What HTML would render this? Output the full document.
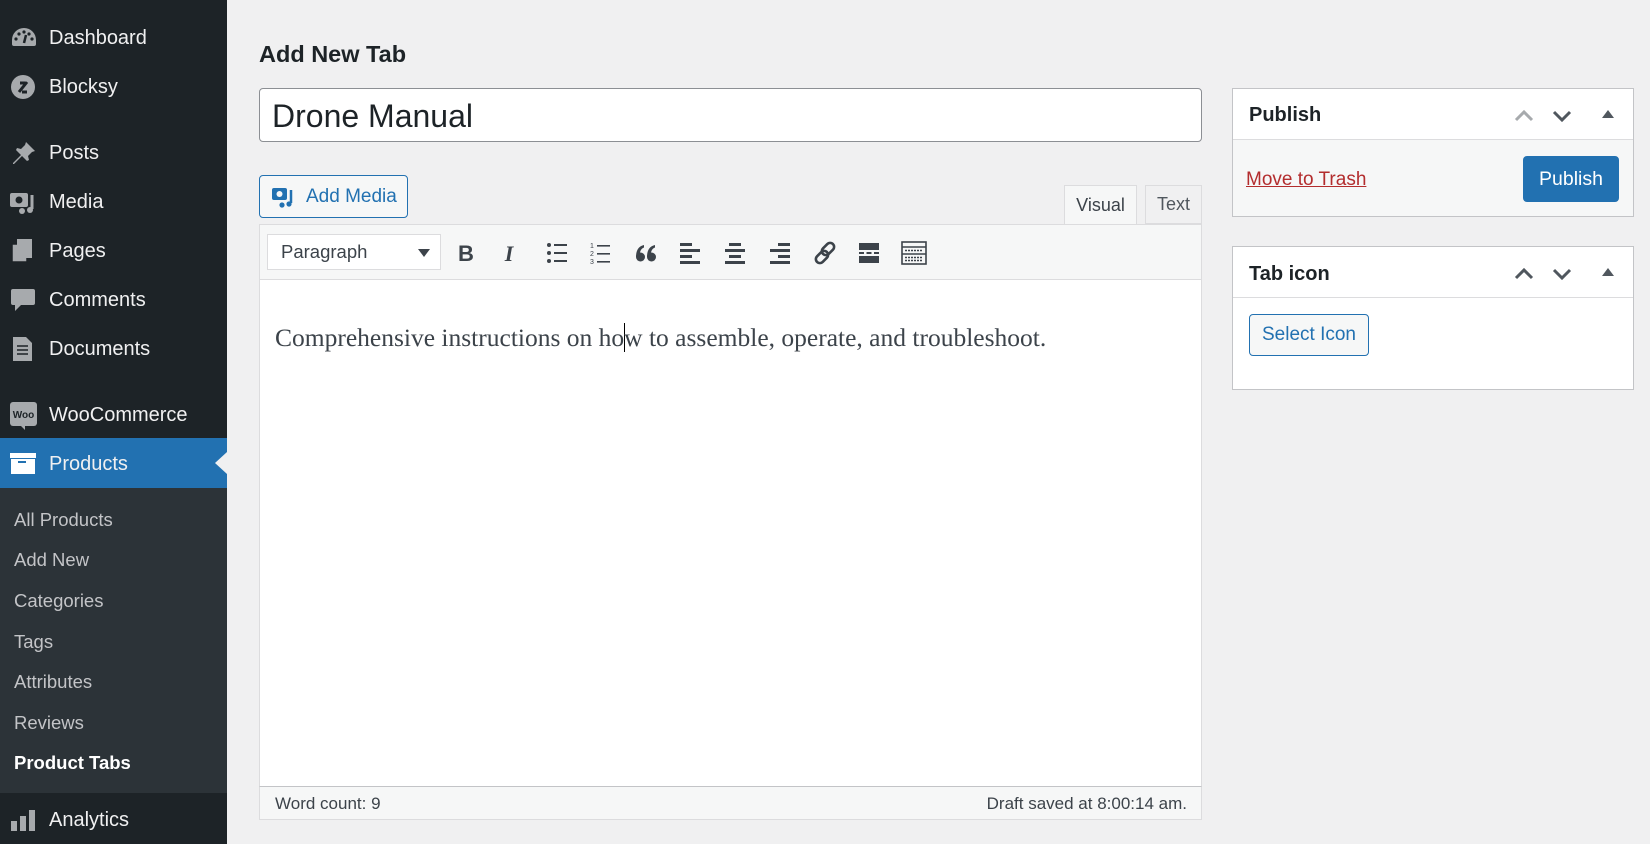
<!DOCTYPE html>
<html><head><meta charset="utf-8"><style>
*{box-sizing:border-box;margin:0;padding:0}
body{width:1650px;height:844px;overflow:hidden;background:#f0f0f1;font-family:"Liberation Sans",sans-serif;position:relative;color:#1d2327}
.side{position:absolute;left:0;top:0;width:227px;height:844px;background:#1d2327}
.mi{position:absolute;left:0;width:227px;color:#f0f0f1;font-size:20px;line-height:24px}
.mi span{position:absolute;left:49px;top:1px;white-space:nowrap}
.mi svg{position:absolute;left:10px;top:0}
.sub{position:absolute;left:0;top:488px;width:227px;height:305px;background:#2c3338}
.si{position:absolute;left:14px;color:#c3c4c7;font-size:18.5px;line-height:22px}
.abs{position:absolute}
.box{position:absolute;background:#fff;border:1px solid #c3c4c7}
.btn{position:absolute;border:1px solid #2271b1;border-radius:4px;color:#2271b1;background:#f6f7f7;font-size:19px;display:flex;align-items:center;justify-content:center}
.ico{position:absolute;top:241px}
</style></head><body>
<div class="side">
 <div class="mi" style="top:25px"><svg width="28" height="24" viewBox="0 0 28 24"><path d="M14 3A12 12 0 0 0 2 15v4a2 2 0 0 0 2 2h20a2 2 0 0 0 2-2v-4A12 12 0 0 0 14 3z" fill="#a7aaad"/><path d="M14 18l2-8" stroke="#1d2327" stroke-width="2.5"/><circle cx="6" cy="14" r="1.6" fill="#1d2327"/><circle cx="9" cy="9" r="1.6" fill="#1d2327"/><circle cx="19" cy="9" r="1.6" fill="#1d2327"/><circle cx="22" cy="14" r="1.6" fill="#1d2327"/><circle cx="14" cy="7" r="1.6" fill="#1d2327"/></svg><span>Dashboard</span></div>
 <div class="mi" style="top:74px"><svg width="28" height="26" viewBox="0 0 28 26"><circle cx="13" cy="13" r="12" fill="#a7aaad"/><path d="M9 18l8-10M10 9h5M12 18h5" stroke="#1d2327" stroke-width="3"/></svg><span>Blocksy</span></div>
 <div class="mi" style="top:140px"><svg width="28" height="26" viewBox="0 0 28 26"><path d="M16 2l9 9-3 1-4 4 1 4-2 1-5-5-8 8-1 0 0-1 8-8-5-5 1-2 4 1 4-4z" fill="#a7aaad"/></svg><span>Posts</span></div>
 <div class="mi" style="top:189px"><svg width="28" height="26" viewBox="0 0 28 26"><rect x="0" y="4" width="18" height="14" rx="2" fill="#a7aaad"/><circle cx="9" cy="11" r="3.5" fill="#1d2327"/><path d="M22 6v14" stroke="#a7aaad" stroke-width="3"/><circle cx="20" cy="21" r="3" fill="#a7aaad"/><circle cx="12" cy="22" r="3" fill="#a7aaad"/></svg><span>Media</span></div>
 <div class="mi" style="top:238px"><svg width="28" height="26" viewBox="0 0 28 26"><rect x="2" y="6" width="15" height="18" fill="#a7aaad" stroke="#1d2327" stroke-width="1.5"/><rect x="7" y="1" width="15" height="19" fill="#a7aaad"/></svg><span>Pages</span></div>
 <div class="mi" style="top:287px"><svg width="28" height="26" viewBox="0 0 28 26"><path d="M3 2h20a2 2 0 0 1 2 2v12a2 2 0 0 1-2 2H11l-6 6v-6H3a2 2 0 0 1-2-2V4a2 2 0 0 1 2-2z" fill="#a7aaad"/></svg><span>Comments</span></div>
 <div class="mi" style="top:336px"><svg width="28" height="26" viewBox="0 0 28 26"><path d="M3 1h13l6 6v18H3z" fill="#a7aaad"/><path d="M7 10h11M7 14h11M7 18h11" stroke="#1d2327" stroke-width="1.6"/></svg><span>Documents</span></div>
 <div class="mi" style="top:402px"><svg width="30" height="28" viewBox="0 0 30 28"><rect x="0" y="0" width="27" height="24" rx="3" fill="#a7aaad"/><path d="M11 24l4 4 0-4z" fill="#a7aaad"/><text x="13.5" y="16" font-size="10" font-family="Liberation Sans" text-anchor="middle" fill="#1d2327" font-weight="bold">Woo</text></svg><span>WooCommerce</span></div>
 <div class="abs" style="top:438px;left:0;width:227px;height:50px;background:#2271b1"></div>
 <div class="abs" style="top:452px;left:215px;width:0;height:0;border-top:11px solid transparent;border-bottom:11px solid transparent;border-right:12px solid #f0f0f1"></div>
 <div class="mi" style="top:451px"><svg width="28" height="26" viewBox="0 0 28 26"><rect x="0" y="2" width="26" height="5" fill="#fff"/><rect x="1" y="8" width="24" height="15" fill="#fff"/><rect x="8" y="10" width="8" height="2" fill="#2271b1"/></svg><span>Products</span></div>
 <div class="sub"></div>
 <div class="si" style="top:509px">All Products</div>
 <div class="si" style="top:549px">Add New</div>
 <div class="si" style="top:590px">Categories</div>
 <div class="si" style="top:631px">Tags</div>
 <div class="si" style="top:671px">Attributes</div>
 <div class="si" style="top:712px">Reviews</div>
 <div class="si" style="top:752px;color:#fff;font-weight:bold">Product Tabs</div>
 <div class="mi" style="top:807px"><svg width="28" height="26" viewBox="0 0 28 26"><rect x="1" y="14" width="6" height="10" fill="#a7aaad"/><rect x="10" y="9" width="6" height="15" fill="#a7aaad"/><rect x="19" y="3" width="6" height="21" fill="#a7aaad"/></svg><span>Analytics</span></div>
</div>

<div class="abs" style="left:259px;top:41px;font-size:23.5px;font-weight:bold;color:#1d2327">Add New Tab</div>
<div class="abs" style="left:259px;top:88px;width:943px;height:54px;background:#fff;border:1px solid #8c8f94;border-radius:4px"></div>
<div class="abs" style="left:272px;top:98px;font-size:32px;color:#1d2327">Drone Manual</div>

<div class="btn" style="left:259px;top:175px;width:149px;height:43px;justify-content:flex-start;padding-left:12px"><svg width="26" height="24" viewBox="0 0 26 24" style="margin-right:8px"><rect x="0" y="3" width="15" height="12" rx="2" fill="#2271b1"/><circle cx="7.5" cy="9" r="3" fill="#f6f7f7"/><path d="M19 5v13" stroke="#2271b1" stroke-width="2.5"/><circle cx="17" cy="19" r="2.6" fill="#2271b1"/><circle cx="10" cy="20" r="2.6" fill="#2271b1"/></svg>Add Media</div>

<div class="abs" style="left:1064px;top:185px;width:73px;height:40px;background:#f6f7f7;border:1px solid #dcdcde;border-bottom:none;font-size:18px;color:#3c434a;display:flex;align-items:center;justify-content:center">Visual</div>
<div class="abs" style="left:1145px;top:185px;width:57px;height:39px;background:#f0f0f1;border:1px solid #dcdcde;font-size:18px;color:#50575e;display:flex;align-items:center;justify-content:center">Text</div>

<div class="abs" style="left:259px;top:224px;width:943px;height:596px;border:1px solid #dcdcde;background:#fff"></div>
<div class="abs" style="left:260px;top:225px;width:941px;height:55px;background:#f6f7f7;border-bottom:1px solid #dcdcde"></div>
<div class="abs" style="left:267px;top:234px;width:174px;height:36px;background:#fff;border:1px solid #dcdcde;font-size:18.5px;color:#3c434a;padding:6px 13px">Paragraph</div>
<div class="abs" style="left:418px;top:249px;border-left:6px solid transparent;border-right:6px solid transparent;border-top:8px solid #3c434a"></div>

<svg class="ico" style="left:455px" width="22" height="24" viewBox="0 0 22 24"><text x="11" y="20" font-size="22" font-weight="bold" font-family="Liberation Sans" text-anchor="middle" fill="#3c434a">B</text></svg>
<svg class="ico" style="left:498px" width="22" height="24" viewBox="0 0 22 24"><text x="11" y="20" font-size="22" font-weight="bold" font-style="italic" font-family="Liberation Serif" text-anchor="middle" fill="#3c434a">I</text></svg>
<svg class="ico" style="left:546px" width="22" height="24" viewBox="0 0 22 24"><g fill="#3c434a"><circle cx="3" cy="4" r="2"/><circle cx="3" cy="12" r="2"/><circle cx="3" cy="20" r="2"/><rect x="8" y="3" width="13" height="2"/><rect x="8" y="11" width="13" height="2"/><rect x="8" y="19" width="13" height="2"/></g></svg>
<svg class="ico" style="left:589px" width="22" height="24" viewBox="0 0 22 24"><g fill="#3c434a"><text x="1" y="7" font-size="7" font-family="Liberation Sans">1</text><text x="1" y="15" font-size="7" font-family="Liberation Sans">2</text><text x="1" y="23" font-size="7" font-family="Liberation Sans">3</text><rect x="8" y="4" width="13" height="1.6"/><rect x="8" y="12" width="13" height="1.6"/><rect x="8" y="20" width="13" height="1.6"/></g></svg>
<svg class="ico" style="left:634px" width="24" height="24" viewBox="0 0 24 24"><g fill="#3c434a"><circle cx="6.5" cy="16" r="4.5"/><circle cx="17.5" cy="16" r="4.5"/><path d="M2 16C2 9 5 5 10 4l0 2.5C6.5 8 5.5 11 6 16z"/><path d="M13 16C13 9 16 5 21 4l0 2.5C17.5 8 16.5 11 17 16z"/></g></svg>
<svg class="ico" style="left:679px" width="22" height="24" viewBox="0 0 22 24"><g fill="#3c434a"><rect x="1" y="2" width="12" height="3"/><rect x="1" y="8" width="20" height="3"/><rect x="1" y="14" width="12" height="3"/><rect x="1" y="20" width="20" height="3"/></g></svg>
<svg class="ico" style="left:724px" width="22" height="24" viewBox="0 0 22 24"><g fill="#3c434a"><rect x="5" y="2" width="12" height="3"/><rect x="1" y="8" width="20" height="3"/><rect x="5" y="14" width="12" height="3"/><rect x="1" y="20" width="20" height="3"/></g></svg>
<svg class="ico" style="left:769px" width="22" height="24" viewBox="0 0 22 24"><g fill="#3c434a"><rect x="9" y="2" width="12" height="3"/><rect x="1" y="8" width="20" height="3"/><rect x="9" y="14" width="12" height="3"/><rect x="1" y="20" width="20" height="3"/></g></svg>
<svg class="ico" style="left:813px" width="24" height="24" viewBox="0 0 24 24"><g fill="none" stroke="#3c434a" stroke-width="2.6"><rect x="11" y="1" width="8" height="14" rx="4" transform="rotate(45 15 8)"/><rect x="5" y="9" width="8" height="14" rx="4" transform="rotate(45 9 16)"/></g></svg>
<svg class="ico" style="left:858px" width="22" height="24" viewBox="0 0 22 24"><g fill="#3c434a"><rect x="1" y="2" width="20" height="7"/><rect x="1" y="11" width="5" height="2"/><rect x="8.5" y="11" width="5" height="2"/><rect x="16" y="11" width="5" height="2"/><rect x="1" y="15" width="20" height="7"/></g></svg>
<svg class="ico" style="left:901px" width="26" height="24" viewBox="0 0 26 24"><g fill="none" stroke="#3c434a" stroke-width="1.6"><rect x="1" y="1" width="24" height="22"/><path d="M1 6h24M1 13h24"/><path d="M4 9.5h18M4 16.5h18M4 19.5h18" stroke-dasharray="2 1"/></g></svg>

<div class="abs" style="left:275px;top:323px;font-family:'Liberation Serif',serif;font-size:25.5px;color:#3c434a;white-space:nowrap">Comprehensive instructions on ho<span style="border-left:1px solid #000;margin-right:-1px"></span>w to assemble, operate, and troubleshoot.</div>

<div class="abs" style="left:259px;top:786px;width:943px;height:34px;background:#f6f7f7;border:1px solid #dcdcde;border-top:1px solid #c3c4c7;font-size:17px;color:#3c434a"><span style="position:absolute;left:15px;top:7px">Word count: 9</span><span style="position:absolute;right:14px;top:7px">Draft saved at 8:00:14 am.</span></div>

<div class="box" style="left:1232px;top:88px;width:402px;height:129px;background:#f6f7f7"></div>
<div class="abs" style="left:1233px;top:89px;width:400px;height:51px;background:#fff;border-bottom:1px solid #dcdcde"></div>
<div class="abs" style="left:1249px;top:104px;font-size:20px;font-weight:bold">Publish</div>
<svg class="abs" style="left:1514px;top:104px" width="120" height="24" viewBox="0 0 120 24"><path d="M2 16l8-8 8 8" fill="none" stroke="#a7aaad" stroke-width="3"/><path d="M40 8l8 8 8-8" fill="none" stroke="#50575e" stroke-width="3"/><path d="M88 14l6-8 6 8z" fill="#50575e"/></svg>
<div class="abs" style="left:1246px;top:169px;font-size:19px;color:#b32d2e;text-decoration:underline">Move to Trash</div>
<div class="abs" style="left:1523px;top:156px;width:96px;height:46px;background:#2271b1;border-radius:4px;color:#fff;font-size:19.5px;display:flex;align-items:center;justify-content:center">Publish</div>

<div class="box" style="left:1232px;top:246px;width:402px;height:144px"></div>
<div class="abs" style="left:1233px;top:247px;width:400px;height:51px;border-bottom:1px solid #dcdcde"></div>
<div class="abs" style="left:1249px;top:263px;font-size:20px;font-weight:bold">Tab icon</div>
<svg class="abs" style="left:1514px;top:262px" width="120" height="24" viewBox="0 0 120 24"><path d="M2 16l8-8 8 8" fill="none" stroke="#50575e" stroke-width="3"/><path d="M40 8l8 8 8-8" fill="none" stroke="#50575e" stroke-width="3"/><path d="M88 14l6-8 6 8z" fill="#50575e"/></svg>
<div class="btn" style="left:1249px;top:314px;width:120px;height:42px">Select Icon</div>
</body></html>
